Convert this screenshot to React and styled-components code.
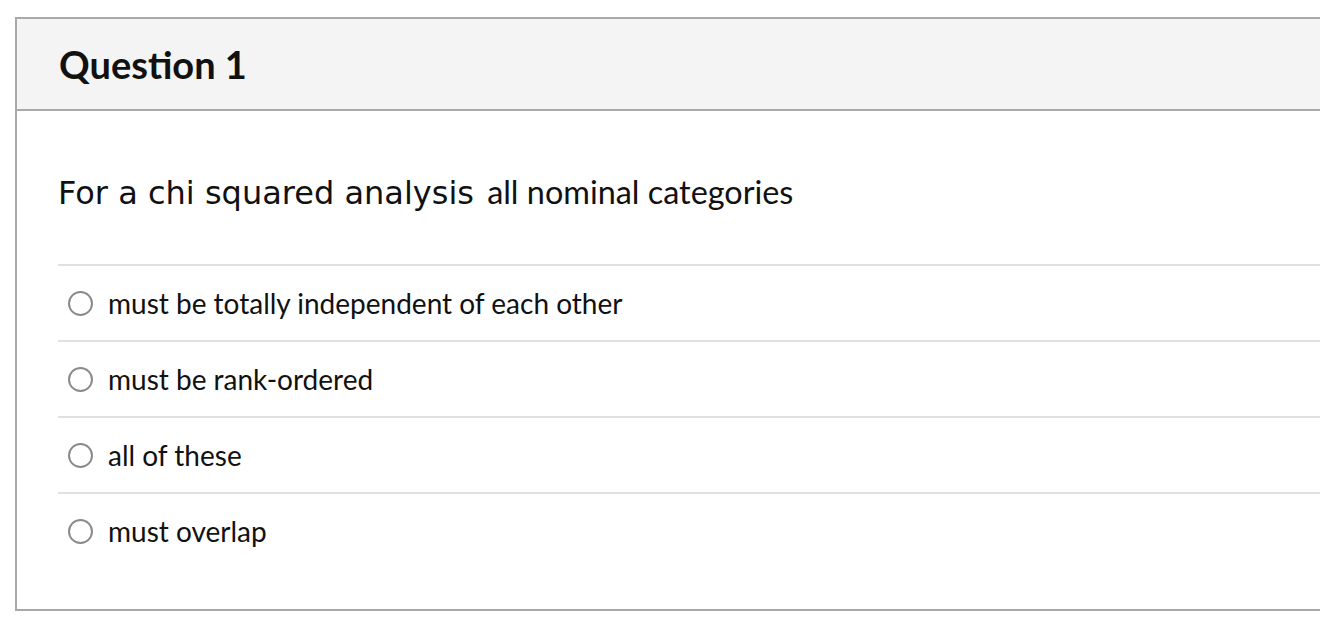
import React from 'react';
import styled, { createGlobalStyle } from 'styled-components';

const GlobalStyle = createGlobalStyle`
  html, body {
    margin: 0;
    padding: 0;
    background: #fff;
    overflow: hidden;
  }
  body {
    font-family: Lato, "Liberation Sans", sans-serif;
    color: #111;
  }
`;

const Page = styled.div`
  padding: 17px 0 0 15px;
  width: 1320px;
  height: 622px;
  box-sizing: border-box;
  overflow: hidden;
`;

const Card = styled.div`
  width: 1360px;
  border: 2px solid #a9a9a9;
  box-sizing: border-box;
`;

const Header = styled.div`
  background: #f4f4f4;
  border-bottom: 2px solid #a9a9a9;
  height: 90px;
  padding-left: 42px;
  display: flex;
  align-items: center;
`;

const Title = styled.h2`
  margin: 0;
  font-family: Lato, sans-serif;
  font-weight: 700;
  font-size: 38px;
  color: #111;
`;

const Body = styled.div`
  padding: 61px 0 41px 41px;
`;

const QuestionText = styled.p`
  margin: 0 0 51px;
  font-size: 32.4px;
  line-height: 40px;
  span {
    font-family: Verdana, "DejaVu Sans", sans-serif;
    font-size: 32px;
    margin-right: 3px;
  }
`;

const Answers = styled.div``;

const Answer = styled.label`
  display: flex;
  align-items: center;
  gap: 15px;
  height: 74px;
  box-sizing: content-box;
  border-top: 2px solid #e0e0e0;
  padding: 0 0 2px 10px;
  margin-bottom: -2px;
  font-size: 28px;
  cursor: pointer;
`;

const Radio = styled.span`
  box-sizing: border-box;
  width: 25px;
  height: 25px;
  border: 2px solid #8a8a8a;
  border-radius: 50%;
  flex: none;
`;

const answers = [
  'must be totally independent of each other',
  'must be rank-ordered',
  'all of these',
  'must overlap',
];

export default function App() {
  return (
    <>
      <GlobalStyle />
      <Page>
        <Card>
          <Header>
            <Title>Question 1</Title>
          </Header>
          <Body>
            <QuestionText>
              <span>For a chi squared analysis </span>all nominal categories
            </QuestionText>
            <Answers>
              {answers.map(a => (
                <Answer key={a}>
                  <Radio />
                  {a}
                </Answer>
              ))}
            </Answers>
          </Body>
        </Card>
      </Page>
    </>
  );
}
